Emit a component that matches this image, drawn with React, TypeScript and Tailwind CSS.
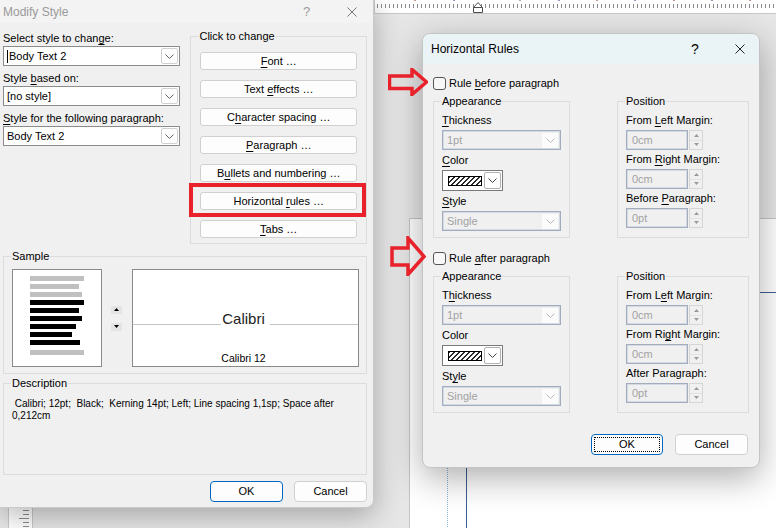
import React from "react";

function Chevron({ className = "" }: { className?: string }) {
  return (
    <svg width="9" height="5" viewBox="0 0 9 5" className={className}>
      <path d="M0.5 0.5L4.5 4.5L8.5 0.5" fill="none" stroke="currentColor" strokeWidth="1" />
    </svg>
  );
}

function CloseX() {
  return (
    <svg width="10" height="10" viewBox="0 0 10 10">
      <path d="M0.5 0.5L9.5 9.5M9.5 0.5L0.5 9.5" stroke="currentColor" strokeWidth="1" />
    </svg>
  );
}

const U = ({ children }: { children: React.ReactNode }) => (
  <span className="underline underline-offset-[2px] decoration-1">{children}</span>
);

function Group({ label, className = "", children }: any) {
  return (
    <div className={`relative border border-[#dcdcdc] ${className}`}>
      <div className="absolute -top-[8px] left-[7px] bg-[#f0f0f0] px-[1px] leading-[15px]">{label}</div>
      {children}
    </div>
  );
}

function Combo({ value, caret }: { value: string; caret?: boolean }) {
  return (
    <div className="h-[20px] bg-white border border-[#8c8c8c] flex items-center pl-[3px] pr-[1px]">
      {caret && <span className="w-px h-[13px] bg-black mr-[1px]" />}
      <span className="flex-1 leading-none">{value}</span>
      <div className="w-[17px] h-[16px] border border-[#d0d0d0] rounded-[2px] flex items-center justify-center text-[#606060]">
        <Chevron />
      </div>
    </div>
  );
}

function Btn({ children }: { children: React.ReactNode }) {
  return (
    <div className="h-[18px] bg-[#fdfdfd] border border-[#d0d0d0] rounded-[3px] flex items-center justify-center leading-none">
      <span>{children}</span>
    </div>
  );
}

const sampleBars = [
  ["bg-[#c0c0c0]", 54], ["bg-[#c0c0c0]", 49], ["bg-[#c0c0c0]", 52],
  ["bg-black", 54], ["bg-black", 49], ["bg-black", 52], ["bg-black", 46], ["bg-black", 42], ["bg-black", 50],
] as const;

function ModifyStyle() {
  return (
    <div className="absolute left-0 top-0 w-[374px] h-[508px] bg-[#f0f0f0] rounded-br-[8px] border-r border-b border-[#c9c9c9] shadow-[0_8px_28px_rgba(0,0,0,0.28)]">
      <div className="h-[23px] bg-[#f3f3f3] flex items-center pl-[3px] text-[#9a9a9a] text-[12px]">
        <span className="flex-1">Modify Style</span>
        <span className="w-[44px] text-[13px]">?</span>
        <span className="w-[26px] text-[#777]"><CloseX /></span>
      </div>
      <div className="pl-[3px] pr-[6px] pt-[7px]">
        <div className="flex">
          <div className="w-[178px] flex flex-col">
            <div className="h-[16px] leading-[16px]">Select style to chan<U>g</U>e:</div>
            <Combo value="Body Text 2" caret />
            <div className="h-[16px] leading-[16px] mt-[4px]">Style <U>b</U>ased on:</div>
            <Combo value="[no style]" />
            <div className="h-[16px] leading-[16px] mt-[4px]"><U>S</U>tyle for the following paragraph:</div>
            <Combo value="Body Text 2" />
          </div>
          <Group label="Click to change" className="ml-[10px] mt-[6px] w-[177px] h-[208px] pt-[15px] px-[9px] flex flex-col gap-[10px]">
            <Btn><U>F</U>ont …</Btn>
            <Btn>Text <U>e</U>ffects …</Btn>
            <Btn>C<U>h</U>aracter spacing …</Btn>
            <Btn><U>P</U>aragraph …</Btn>
            <Btn>B<U>u</U>llets and numbering …</Btn>
            <Btn>Horizontal <U>r</U>ules …</Btn>
            <Btn><U>T</U>abs …</Btn>
          </Group>
        </div>

        <Group label="Sample" className="mt-[12px] h-[118px] pt-[12px] pl-[8px] flex items-start">
          <div className="w-[90px] h-[98px] bg-white border border-[#8a8a8a] pt-[6px] pl-[17px] flex flex-col gap-[3px]">
            {sampleBars.map(([c, w], i) => (
              <div key={i} className={`h-[5px] ${c}`} style={{ width: w }} />
            ))}
            <div className="h-[5px] w-[54px] bg-[#c0c0c0] mt-[2px]" />
          </div>
          <div className="ml-[9px] w-[11px] h-[98px] flex flex-col justify-center gap-[9px]">
            <div className="h-[8px] bg-[#e4e4e4] flex items-center justify-center">
              <svg width="5" height="3" viewBox="0 0 5 3"><path d="M2.5 0L5 3H0Z" fill="#000" /></svg>
            </div>
            <div className="h-[8px] bg-[#e4e4e4] flex items-center justify-center">
              <svg width="5" height="3" viewBox="0 0 5 3"><path d="M0 0H5L2.5 3Z" fill="#000" /></svg>
            </div>
          </div>
          <div className="ml-[10px] w-[227px] h-[98px] bg-white border border-[#8a8a8a] flex flex-col pt-[40px]">
            <div className="flex items-end h-[18px]">
              <div className="flex-1 h-px bg-[#c4c4c4] mb-[3px]" />
              <span className="text-[15px] leading-[18px] text-[#222] pl-[1px] pr-[5px]">Calibri</span>
              <div className="flex-1 h-px bg-[#c4c4c4] mb-[3px]" />
            </div>
            <div className="flex-1" />
            <div className="text-[10.5px] leading-[13px] text-center mb-[1px] pr-[4px]">Calibri 12</div>
          </div>
        </Group>

        <Group label="Description" className="mt-[9px] h-[92px] pt-[14px] pl-[8px]">
          <div className="text-[10px] leading-[12px] whitespace-pre">
            {" Calibri; 12pt;  Black;  Kerning 14pt; Left; Line spacing 1,1sp; Space after"}
            <br />
            {"0,212cm"}
          </div>
        </Group>

        <div className="mt-[6px] flex justify-end gap-[11px]">
          <div className="w-[73px] h-[21px] bg-[#fdfdfd] border border-[#0067c0] rounded-[4px] flex items-center justify-center">OK</div>
          <div className="w-[73px] h-[21px] bg-[#fdfdfd] border border-[#d0d0d0] rounded-[4px] flex items-center justify-center">Cancel</div>
        </div>
      </div>
    </div>
  );
}

function DisSelect({ value }: { value: string }) {
  return (
    <div className="w-[119px] h-[20px] border border-[#a3acbc] shadow-[inset_0_0_0_1px_#d3dae4] bg-[#f0f0f0] flex items-center pl-[4px] pr-[2px] text-[#a2a2a2]">
      <span className="flex-1 leading-none">{value}</span>
      <div className="w-[16px] h-[15px] bg-[#fbfbfb] flex items-center justify-center text-[#b8b8b8]">
        <Chevron />
      </div>
    </div>
  );
}

function ColorBtn() {
  return (
    <div className="w-[61px] h-[21px] bg-white border border-[#7a7a7a] flex items-center pl-[5px] pr-[1px]">
      <div className="w-[34px] h-[10px] border border-black bg-[repeating-linear-gradient(135deg,#2a2a2a_0px,#2a2a2a_1px,#ffffff_1px,#ffffff_3.5px)]" />
      <div className="ml-auto w-[17px] h-[17px] border border-[#b0b0b0] rounded-[2px] flex items-center justify-center text-[#404040]">
        <Chevron />
      </div>
    </div>
  );
}

function SpinInput({ value }: { value: string }) {
  return (
    <div className="flex gap-[1px]">
      <div className="w-[62px] h-[20px] border border-[#a3acbc] shadow-[inset_0_0_0_1px_#d3dae4] bg-[#f0f0f0] pl-[5px] flex items-center text-[#a2a2a2] leading-none">
        {value}
      </div>
      <div className="w-[14px] h-[20px] border border-[#d6d6d6] flex flex-col">
        <div className="flex-1 flex items-center justify-center border-b border-[#e2e2e2]">
          <svg width="5" height="3" viewBox="0 0 5 3"><path d="M2.5 0L5 3H0Z" fill="#9a9a9a" /></svg>
        </div>
        <div className="flex-1 flex items-center justify-center">
          <svg width="5" height="3" viewBox="0 0 5 3"><path d="M0 0H5L2.5 3Z" fill="#9a9a9a" /></svg>
        </div>
      </div>
    </div>
  );
}

const Lbl = ({ children, className = "" }: any) => (
  <div className={`h-[15px] leading-[15px] mb-[2px] ${className}`}>{children}</div>
);

function RuleSection({ check, app, pos, className = "" }: any) {
  return (
    <div className={className}>
      <div className="h-[13px] flex items-center gap-[3px]">
        <div className="w-[13px] h-[13px] rounded-[3px] border border-[#555] bg-[#f7f7f7]" />
        <span className="leading-none">{check}</span>
      </div>
      <div className="mt-[11px] flex gap-[47px]">
        <Group label="Appearance" className="w-[137px] h-[137px] pt-[11px] pl-[8px]">
          <Lbl>{app[0]}</Lbl>
          <DisSelect value="1pt" />
          <Lbl className="mt-[3px]">{app[1]}</Lbl>
          <ColorBtn />
          <Lbl className="mt-[3px]">{app[2]}</Lbl>
          <DisSelect value="Single" />
        </Group>
        <Group label="Position" className="w-[132px] h-[137px] pt-[11px] pl-[8px]">
          <Lbl>{pos[0]}</Lbl>
          <SpinInput value="0cm" />
          <Lbl className="mt-[2px]">{pos[1]}</Lbl>
          <SpinInput value="0cm" />
          <Lbl className="mt-[2px]">{pos[2]}</Lbl>
          <SpinInput value="0pt" />
        </Group>
      </div>
    </div>
  );
}

function HRules() {
  return (
    <div className="absolute left-[422px] top-[33px] w-[338px] h-[435px] bg-[#f0f0f0] rounded-[8px] border border-[#c4c4c4] shadow-[0_10px_34px_rgba(0,0,0,0.32)] overflow-hidden">
      <div className="h-[30px] bg-[#eaf3f6] flex items-center pl-[8px] text-[12px]">
        <span className="flex-1">Horizontal Rules</span>
        <span className="w-[44px] text-[14px]">?</span>
        <span className="w-[24px] text-[#222]"><CloseX /></span>
      </div>
      <div className="px-[10px] pt-[13px]">
        <RuleSection
          check={<>Rule <U>b</U>efore paragraph</>}
          app={[<><U>T</U>hickness</>, <><U>C</U>olor</>, <><U>S</U>tyle</>]}
          pos={[<>From <U>L</U>eft Margin:</>, <>From <U>R</U>ight Margin:</>, <>Before <U>P</U>aragraph:</>]}
        />
        <RuleSection
          className="mt-[14px]"
          check={<>Rule <U>a</U>fter paragraph</>}
          app={[<>T<U>h</U>ickness</>, <>Color</>, <>St<U>y</U>le</>]}
          pos={[<>From L<U>e</U>ft Margin:</>, <>From Ri<U>g</U>ht Margin:</>, <>After Paragraph:</>]}
        />
        <div className="mt-[21px] flex justify-end gap-[12px] pr-[1px]">
          <div className="w-[72px] h-[21px] bg-[#fdfdfd] border border-[#0067c0] rounded-[4px] p-[2px]">
            <div className="h-full border border-dotted border-black flex items-center justify-center">OK</div>
          </div>
          <div className="w-[73px] h-[21px] bg-[#fdfdfd] border border-[#d0d0d0] rounded-[4px] flex items-center justify-center">Cancel</div>
        </div>
      </div>
    </div>
  );
}

function Ruler() {
  const ticks = Array.from({ length: 101 }, (_, i) => i * 4 + 2);
  const nums = [413, 452, 518, 557, 595, 633, 672, 710, 748].map((x) => x - 374);
  return (
    <div className="absolute left-[374px] top-0 w-[402px] h-[14px] bg-white border-b border-l border-[#c8c8c8]">
      <svg width="402" height="13" className="block">
        {ticks.map((x) => (
          <line key={x} x1={x + 0.5} x2={x + 0.5} y1="4" y2="8" stroke="#8c8c8c" />
        ))}
        {nums.map((x, i) => (
          <rect key={i} x={x} y="0" width="2" height="1" fill={i % 2 ? "#8a9ac0" : "#c09a8a"} />
        ))}
        <path d="M98.5 7.5L103 2.5L107.5 7.5V12.5H98.5ZM98.5 7.5H107.5" fill="#fff" stroke="#505050" />
      </svg>
    </div>
  );
}

export default function App() {
  return (
    <div className="relative w-[776px] h-[528px] overflow-hidden bg-[#e6e6e6] font-['Liberation_Sans',Arial,sans-serif] text-[11px] text-black">
      <Ruler />
      {/* document page */}
      <div className="absolute left-[409px] top-[218px] w-[400px] h-[330px] bg-white border-l border-t border-[#c4c4c4]" />
      <div className="absolute left-[447px] top-[219px] h-[320px] border-l border-dotted border-[#8ab4da]" />
      <div className="absolute left-[466px] top-[292px] w-[330px] h-[260px] border-l border-t border-[#3d5f91]" />
      {/* vertical ruler */}
      <div className="absolute left-[8px] top-[500px] w-[25px] h-[40px] bg-white border-x border-[#c8c8c8]">
        <svg width="23" height="40" className="block">
          {[10, 14, 18, 22, 26].map((y) => (
            <line key={y} x1={y === 18 ? 10 : 14} x2="20" y1={y + 0.5} y2={y + 0.5} stroke="#8c8c8c" />
          ))}
        </svg>
      </div>

      <ModifyStyle />
      <div className="absolute left-[189px] top-[183px] w-[177px] h-[34px] border-4 border-[#e8212a]" />
      <HRules />

      <svg className="absolute left-[388px] top-[68px]" width="40" height="28" viewBox="0 0 40 28">
        <path d="M1.5 8H24V1.5L38.5 14L24 26.5V20.5H1.5Z" fill="none" stroke="#e8212a" strokeWidth="3.5" />
      </svg>
      <svg className="absolute left-[390px] top-[236px]" width="36" height="40" viewBox="0 0 36 40">
        <path d="M2 12H18V2L34 20.5L18 38.5V29H2Z" fill="none" stroke="#e8212a" strokeWidth="3.5" />
      </svg>
    </div>
  );
}
